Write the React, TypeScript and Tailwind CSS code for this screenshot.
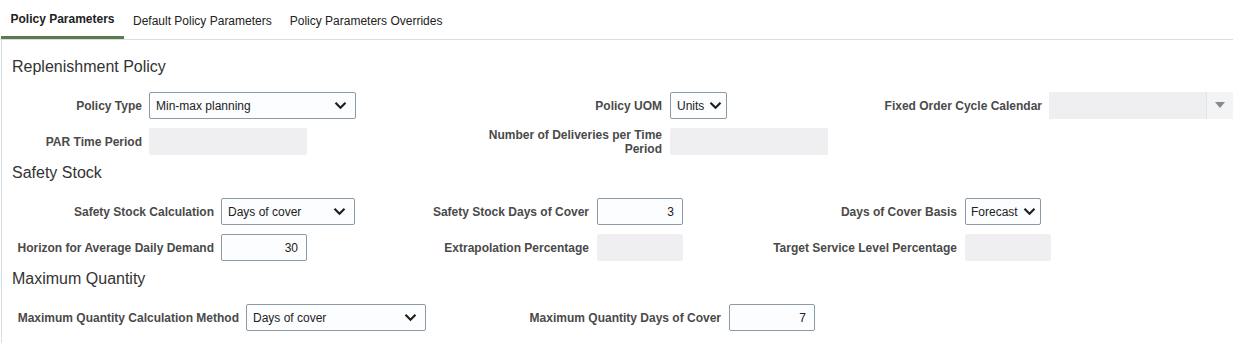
import React from 'react';

const font = { fontFamily: '"Liberation Sans", Arial, sans-serif' };

const Chevron: React.FC = () => (
  <svg width="13" height="9" viewBox="0 0 13 9" className="shrink-0">
    <path d="M1.5 1.8 L6.5 6.8 L11.5 1.8" fill="none" stroke="#1f1f1f" strokeWidth="2.2" />
  </svg>
);

const Label: React.FC<{ text: string; className?: string }> = ({ text, className = '' }) => (
  <div className={`flex items-center justify-end text-right text-[12px] font-bold leading-[14px] text-[#4a4a4a] ${className}`}>
    {text}
  </div>
);

const Select: React.FC<{ value: string; width: string; pad?: string }> = ({ value, width, pad = 'pl-[6px] pr-[8px]' }) => (
  <div
    className={`flex h-[27px] ${width} items-center justify-between rounded-[2px] border border-[#8c9aa6] bg-[#fcfdfe] ${pad} text-[12px] text-[#222]`}
  >
    <span>{value}</span>
    <Chevron />
  </div>
);

const NumberInput: React.FC<{ value: string }> = ({ value }) => (
  <div className="flex h-[27px] w-[86px] items-center justify-end rounded-[2px] border border-[#8c9aa6] bg-[#fcfdfe] pr-[8px] text-[12px] text-[#222]">
    {value}
  </div>
);

const Disabled: React.FC<{ width: string }> = ({ width }) => (
  <div className={`h-[27px] ${width} rounded-[2px] bg-[#efeff1]`} />
);

const Heading: React.FC<{ text: string }> = ({ text }) => (
  <div className="pl-[10px] text-[16px] leading-[20px] text-[#333]">{text}</div>
);

export default function App() {
  return (
    <div className="h-[343px] w-[1233px] overflow-hidden bg-white" style={font}>
      {/* tabs */}
      <div className="flex h-[40px] border-b border-[#d6dfe6] text-[12px] text-[#222]">
        <div className="ml-[1px] flex w-[123px] items-center justify-center border-b-[3px] border-[#5c7a4c] pt-[2px] font-bold">
          Policy Parameters
        </div>
        <div className="flex items-center pl-[9px] pt-[2px]">Default Policy Parameters</div>
        <div className="flex items-center pl-[18px] pt-[2px]">Policy Parameters Overrides</div>
      </div>

      <div className="ml-[1px] h-full border-l border-[#d6dfe6]">
        {/* Replenishment Policy */}
        <div className="pt-[17px]">
          <Heading text="Replenishment Policy" />
        </div>
        <div className="mt-[15px] grid grid-cols-[136px_333px_188px_205px_174px_184px] gap-y-[9px] pl-[11px]">
          <Label text="Policy Type" className="pr-[7px]" />
          <div><Select value="Min-max planning" width="w-[207px]" /></div>
          <Label text="Policy UOM" className="pr-[8px]" />
          <div><Select value="Units" width="w-[57px]" pad="pl-[6px] pr-[4px]" /></div>
          <Label text="Fixed Order Cycle Calendar" className="pr-[7px]" />
          <div className="flex h-[27px] bg-[#efeff1]">
            <div className="flex-1" />
            <div className="flex w-[27px] items-center justify-center border-l border-[#e1e5ea] bg-[#f3f4f6]">
              <svg width="10" height="7" viewBox="0 0 10 7">
                <path d="M0 0 H10 L5 6 Z" fill="#8a8a8a" />
              </svg>
            </div>
          </div>

          <Label text="PAR Time Period" className="pr-[7px]" />
          <div><Disabled width="w-[158px]" /></div>
          <Label text="Number of Deliveries per Time Period" className="pl-[6px] pr-[8px]" />
          <div><Disabled width="w-[158px]" /></div>
          <div />
          <div />
        </div>

        {/* Safety Stock */}
        <div className="pt-[7px]">
          <Heading text="Safety Stock" />
        </div>
        <div className="mt-[15px] grid grid-cols-[208px_199px_177px_163px_205px_268px] gap-y-[9px] pl-[11px]">
          <Label text="Safety Stock Calculation" className="pr-[7px]" />
          <div><Select value="Days of cover" width="w-[134px]" /></div>
          <Label text="Safety Stock Days of Cover" className="pr-[8px]" />
          <div><NumberInput value="3" /></div>
          <Label text="Days of Cover Basis" className="pr-[8px]" />
          <div><Select value="Forecast" width="w-[76px]" pad="pl-[5px] pr-[4px]" /></div>

          <Label text="Horizon for Average Daily Demand" className="pr-[7px]" />
          <div><NumberInput value="30" /></div>
          <Label text="Extrapolation Percentage" className="pr-[8px]" />
          <div><Disabled width="w-[86px]" /></div>
          <Label text="Target Service Level Percentage" className="pr-[8px]" />
          <div><Disabled width="w-[86px]" /></div>
        </div>

        {/* Maximum Quantity */}
        <div className="pt-[8px]">
          <Heading text="Maximum Quantity" />
        </div>
        <div className="mt-[15px] grid grid-cols-[233px_274px_209px_200px] pl-[11px]">
          <Label text="Maximum Quantity Calculation Method" className="pr-[7px]" />
          <div><Select value="Days of cover" width="w-[180px]" /></div>
          <Label text="Maximum Quantity Days of Cover" className="pr-[8px]" />
          <div><NumberInput value="7" /></div>
        </div>
      </div>
    </div>
  );
}
